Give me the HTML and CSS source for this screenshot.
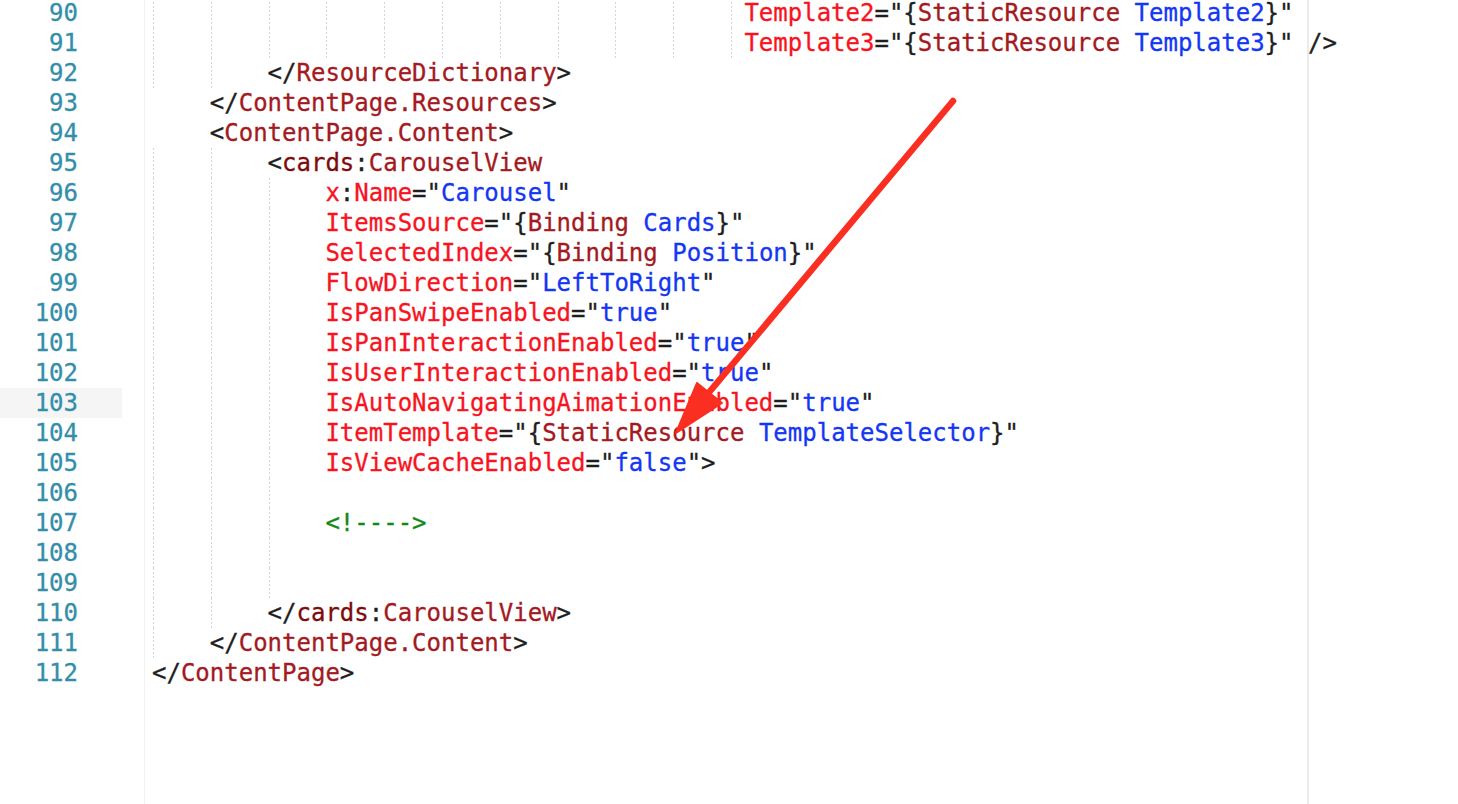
FILE: index.html
```html
<!doctype html>
<html lang="en">
<head>
  <meta charset="UTF-8" />
  <title>MainPage.xaml</title>
  <link rel="stylesheet" href="styles.css">
</head>
<body>
  <div class="editor">
    <div class="gutter">
      <div class="ln">90</div>
      <div class="ln">91</div>
      <div class="ln">92</div>
      <div class="ln">93</div>
      <div class="ln">94</div>
      <div class="ln">95</div>
      <div class="ln">96</div>
      <div class="ln">97</div>
      <div class="ln">98</div>
      <div class="ln">99</div>
      <div class="ln">100</div>
      <div class="ln">101</div>
      <div class="ln">102</div>
      <div class="ln cur">103</div>
      <div class="ln">104</div>
      <div class="ln">105</div>
      <div class="ln">106</div>
      <div class="ln">107</div>
      <div class="ln">108</div>
      <div class="ln">109</div>
      <div class="ln">110</div>
      <div class="ln">111</div>
      <div class="ln">112</div>
    </div>
    <div class="code">
<div class="line"><i class="g"></i><i class="g"></i><i class="g"></i><i class="g"></i><i class="g"></i><i class="g"></i><i class="g"></i><i class="g"></i><i class="g"></i><i class="g"></i><i class="g one"></i><span class="a">Template2</span>="{<span class="t">StaticResource</span> <span class="v">Template2</span>}"</div>
<div class="line"><i class="g"></i><i class="g"></i><i class="g"></i><i class="g"></i><i class="g"></i><i class="g"></i><i class="g"></i><i class="g"></i><i class="g"></i><i class="g"></i><i class="g one"></i><span class="a">Template3</span>="{<span class="t">StaticResource</span> <span class="v">Template3</span>}" /&gt;</div>
<div class="line"><i class="g"></i><i class="g"></i>&lt;/<span class="t">ResourceDictionary</span>&gt;</div>
<div class="line">    &lt;/<span class="t">ContentPage.Resources</span>&gt;</div>
<div class="line">    &lt;<span class="t">ContentPage.Content</span>&gt;</div>
<div class="line"><i class="g"></i><i class="g"></i>&lt;<span class="n">cards</span>:<span class="t">CarouselView</span></div>
<div class="line"><i class="g"></i><i class="g"></i><i class="g"></i><span class="a">x</span>:<span class="a">Name</span>="<span class="v">Carousel</span>"</div>
<div class="line"><i class="g"></i><i class="g"></i><i class="g"></i><span class="a">ItemsSource</span>="{<span class="t">Binding</span> <span class="v">Cards</span>}"</div>
<div class="line"><i class="g"></i><i class="g"></i><i class="g"></i><span class="a">SelectedIndex</span>="{<span class="t">Binding</span> <span class="v">Position</span>}"</div>
<div class="line"><i class="g"></i><i class="g"></i><i class="g"></i><span class="a">FlowDirection</span>="<span class="v">LeftToRight</span>"</div>
<div class="line"><i class="g"></i><i class="g"></i><i class="g"></i><span class="a">IsPanSwipeEnabled</span>="<span class="v">true</span>"</div>
<div class="line"><i class="g"></i><i class="g"></i><i class="g"></i><span class="a">IsPanInteractionEnabled</span>="<span class="v">true</span>"</div>
<div class="line"><i class="g"></i><i class="g"></i><i class="g"></i><span class="a">IsUserInteractionEnabled</span>="<span class="v">true</span>"</div>
<div class="line"><i class="g"></i><i class="g"></i><i class="g"></i><span class="a">IsAutoNavigatingAimationEnabled</span>="<span class="v">true</span>"</div>
<div class="line"><i class="g"></i><i class="g"></i><i class="g"></i><span class="a">ItemTemplate</span>="{<span class="t">StaticResource</span> <span class="v">TemplateSelector</span>}"</div>
<div class="line"><i class="g"></i><i class="g"></i><i class="g"></i><span class="a">IsViewCacheEnabled</span>="<span class="v">false</span>"&gt;</div>
<div class="line"><i class="g"></i><i class="g"></i><i class="g"></i></div>
<div class="line"><i class="g"></i><i class="g"></i><i class="g"></i><span class="c">&lt;!----&gt;</span></div>
<div class="line"><i class="g"></i><i class="g"></i><i class="g"></i></div>
<div class="line"><i class="g"></i><i class="g"></i><i class="g"></i></div>
<div class="line"><i class="g"></i><i class="g"></i>&lt;/<span class="n">cards</span>:<span class="t">CarouselView</span>&gt;</div>
<div class="line"><i class="g"></i>&lt;/<span class="t">ContentPage.Content</span>&gt;</div>
<div class="line">&lt;/<span class="t">ContentPage</span>&gt;</div>
    </div>
  </div>

  <svg class="arrow" width="1458" height="804" viewBox="0 0 1458 804">
    <line x1="953" y1="101" x2="706" y2="396" stroke="#fb2e22" stroke-width="6.5" stroke-linecap="round" />
    <polygon points="676,433 697,383 722,403" fill="#fb2e22" stroke="#fb2e22" stroke-width="2" stroke-linejoin="round" />
  </svg>
</body>
</html>
```

FILE: styles.css
```css
* { box-sizing: border-box; }
html, body { margin: 0; height: 100%; }
body {
  background: #fff;
  overflow: hidden;
  font-family: "DejaVu Sans Mono", "Liberation Mono", monospace;
  font-size: 24px;
  color: #1e1e1e;
  -webkit-text-stroke: 0.3px currentColor;
}
.editor {
  display: flex;
  height: 806px;
  margin-top: -2px;
}
.gutter { width: 122px; margin-right: 22px; flex: none; }
.ln {
  height: 30px;
  line-height: 30px;
  text-align: right;
  padding-right: 44px;
  color: #348eaa;
}
.ln.cur { background: #f5f5f5; }

.code {
  flex: 1;
  border-left: 1px solid #f2f2f2;
  padding-left: 7px;
  background: linear-gradient(#ebebeb, #ebebeb) no-repeat;
  background-size: 2px 100%;
  background-position: calc(6px + 80ch) 0;
}
.line {
  height: 30px;
  line-height: 30px;
  white-space: pre;
}
.g {
  display: inline-block;
  width: 4ch;
  height: 30px;
  vertical-align: top;
  background: repeating-linear-gradient(to bottom, #d6d6d6 0 2px, transparent 2px 4px) no-repeat;
  background-size: 1px 100%;
  background-position: 1px 0;
}
.g.one { width: 1ch; }

.t { color: #a31a1f; }
.n { color: #7d0b0b; }
.a { color: #f7141e; }
.v { color: #1436f5; }
.c { color: #128a12; }

.arrow {
  position: absolute;
  top: 0;
  left: 0;
  pointer-events: none;
}
```
